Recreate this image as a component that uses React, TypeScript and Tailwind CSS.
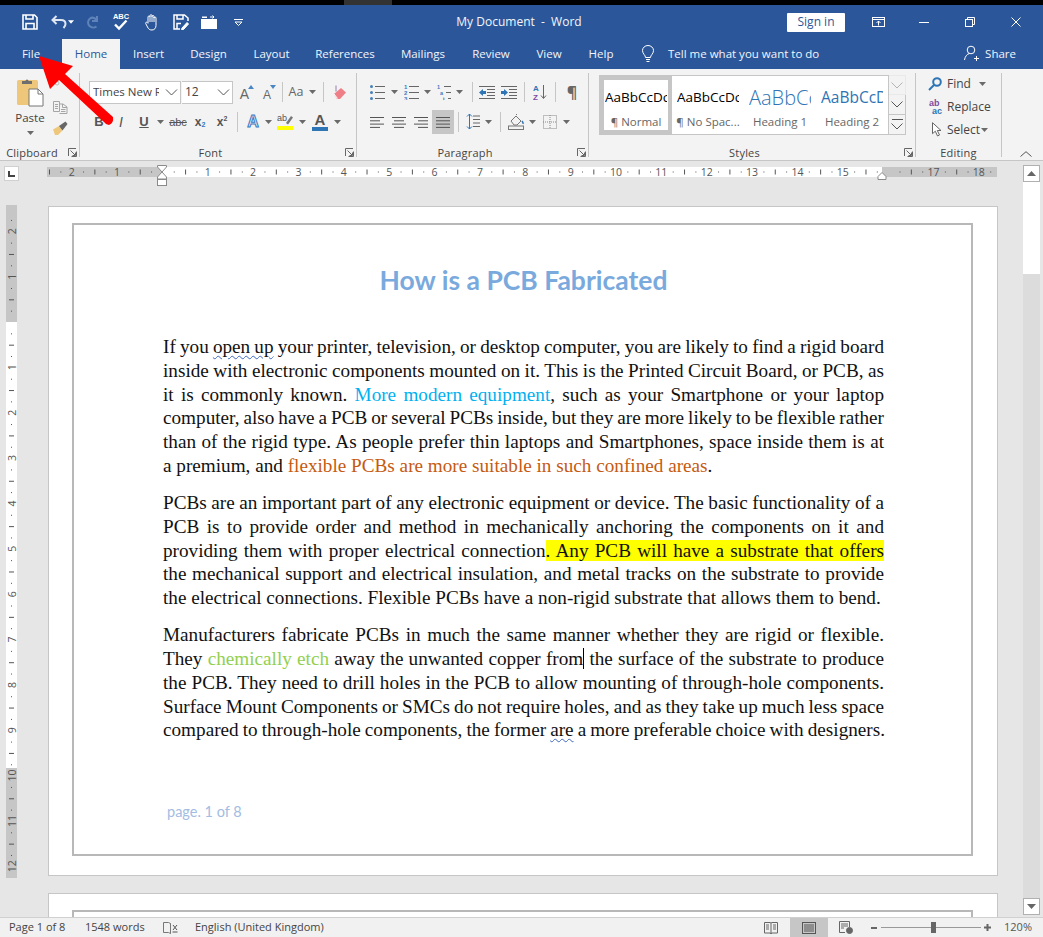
import React from "react";

const ui = { fontFamily: '"Open Sans", "Noto Sans", sans-serif' };

function Drop({ c = "#6a6a6a" }: { c?: string }) {
  return (
    <svg width="7" height="4" viewBox="0 0 7 4"><path d="M0 0h7L3.500 4z" fill={c} /></svg>
  );
}
function Chevron({ w = 12 }: { w?: number }) {
  return (
    <svg width={w} height="7" viewBox="0 0 12 7" fill="none" stroke="#555" strokeWidth="1"><path d="M0.500 0.500 6 6l5.500-5.500" /></svg>
  );
}
function Launcher() {
  return (
    <svg width="9" height="9" viewBox="0 0 9 9" fill="none" stroke="#666" strokeWidth="1"><path d="M0.500 8V0.500H8M8.500 3.500v5h-5M2.500 2.500 7 7M7.500 4.500v3h-3" /></svg>
  );
}
function Sep({ h = "h-[24px]" }: { h?: string }) {
  return <div className={`w-px bg-[#c6c6c6] ${h}`} />;
}
function Cell({ w, children, className = "" }: { w: string; children?: React.ReactNode; className?: string }) {
  return <div className={`flex items-center justify-center h-[24px] shrink-0 ${w} ${className}`}>{children}</div>;
}
function Lines({ kind }: { kind: "l" | "c" | "r" | "j" }) {
  const rows = { l: [[0, 14], [0, 10], [0, 14], [0, 10]], c: [[0, 14], [2, 12], [0, 14], [2, 12]], r: [[0, 14], [4, 14], [0, 14], [4, 14]], j: [[0, 14], [0, 14], [0, 14], [0, 14]] }[kind];
  return (
    <svg width="14" height="11" viewBox="0 0 14 11">
      {rows.map((r, i) => <rect key={i} x={r[0]} y={i * 3.300} width={r[1] - r[0]} height="1" fill="#555" />)}
    </svg>
  );
}

function QuickAccess() {
  return (
    <div className="flex items-center pl-[21px] h-full">
      <Cell w="w-[18px]">
        <svg width="16" height="16" viewBox="0 0 16 16" fill="none" stroke="#fff" strokeWidth="1.600"><path d="M1 1h11.500L15 3.500V15H1z" /><path d="M4 1v4h7V1M4 15v-5.500h8V15" /></svg>
      </Cell>
      <Cell w="w-[25px] ml-[7px]">
        <svg width="16" height="14" viewBox="0 0 16 14" fill="none" stroke="#dfe7f3" strokeWidth="2"><path d="M5.500 1 1.500 5l4 4M2 5h8c3 0 4.500 1.800 4.500 4 0 2-1 3-2 4" /></svg>
      </Cell>
      <Cell w="w-[6px] -ml-[3px]"><Drop c="#fff" /></Cell>
      <Cell w="w-[18px] ml-[10px]">
        <svg width="15" height="14" viewBox="0 0 15 14" fill="none" stroke="#5f82b8" strokeWidth="2"><path d="M11 1v5h-5M11 5.500C8.500 2.500 6 2 4 3.500 1.500 5.500 1.500 9 3.500 11c2 2 5 2 7 .5" /></svg>
      </Cell>
      <Cell w="w-[20px] ml-[9px]">
        <svg width="20" height="20" viewBox="0 0 20 20">
          <text x="10" y="7" textAnchor="middle" fontSize="7.500" fontWeight="700" fill="#fff" fontFamily="Liberation Sans">ABC</text>
          <path d="M4 12.500 8 16.500 15.500 8.500" fill="none" stroke="#fff" strokeWidth="2.400" />
        </svg>
      </Cell>
      <Cell w="w-[16px] ml-[12px]">
        <svg width="13" height="17" viewBox="0 0 13 17" fill="none" stroke="#fff"><path d="M3 9V3a1 1 0 0 1 2 0V1.700a1 1 0 0 1 2 0V2.500a1 1 0 0 1 2 0V4a1 1 0 0 1 2 0v7.500c0 2.500-1.500 4.500-4 4.500-2.500 0-3.500-1-4.500-3L.7 9.500c-.5-1 .8-1.800 1.500-1L3 9.500M5 3v5M7 2v6M9 3v5" /></svg>
      </Cell>
      <Cell w="w-[16px] ml-[14px]">
        <svg width="16" height="16" viewBox="0 0 16 16" fill="none" stroke="#fff" strokeWidth="1.500"><path d="M7 15H1V1h10.500L15 4v3M4 1v4h6V1M4 15V9.500h4" /><path d="M9 14l5-5.500 1.500 1.500-5 5.500H8.500z" fill="#fff" strokeWidth="1" /></svg>
      </Cell>
      <Cell w="w-[18px] ml-[11px]">
        <svg width="16" height="14" viewBox="0 0 16 14" fill="#fff"><path d="M0 4h16v10H0zM1 1.500h5V3H1z" /><path d="M9 2h4M11.500 .5 13 2l-1.500 1.500" stroke="#fff" fill="none" /></svg>
      </Cell>
      <Cell w="w-[12px] ml-[14px]">
        <svg width="9" height="7" viewBox="0 0 9 7" fill="#fff"><rect x="0" y="0" width="9" height="1" /><path d="M1 3h7L4.500 6.500z" fill="none" stroke="#fff" /></svg>
      </Cell>
    </div>
  );
}

function TitleBar() {
  return (
    <div className="h-[34px] bg-[#2b579a] flex items-center text-white shrink-0 relative">
      <div className="w-[430px] h-full shrink-0"><QuickAccess /></div>
      <div className="w-[178px] shrink-0 text-center text-[12px] text-[#f2f5fa] whitespace-pre">My Document  -  Word</div>
      <div className="w-[179px] shrink-0" />
      <div className="w-[58px] shrink-0 h-[19px] bg-white rounded-[1px] text-[#2b579a] text-[12px] flex items-center justify-center">Sign in</div>
      <Cell w="w-[66px]">
        <svg width="13" height="10" viewBox="0 0 13 10" fill="none" stroke="#fff"><rect x=".5" y=".5" width="12" height="9" /><path d="M0 2.500h13M6.500 8.500V4M4.500 6l2-2 2 2" /></svg>
      </Cell>
      <Cell w="w-[26px]"><div className="w-[10px] h-px bg-white" /></Cell>
      <Cell w="w-[66px]">
        <svg width="10" height="10" viewBox="0 0 10 10" fill="none" stroke="#fff"><rect x=".5" y="2.500" width="7" height="7" /><path d="M2.500 2.500v-2h7v7h-2" /></svg>
      </Cell>
      <Cell w="w-[26px]">
        <svg width="10" height="10" viewBox="0 0 10 10" fill="none" stroke="#fff"><path d="M.5.500l9 9M9.500.500l-9 9" /></svg>
      </Cell>
    </div>
  );
}

function Tab({ w, children }: { w: string; children: React.ReactNode }) {
  return <div className={`${w} text-center text-[#f2f5fa] pt-[6px]`}>{children}</div>;
}

function Tabs() {
  return (
    <div className="h-[30px] bg-[#2b579a] flex text-[11.5px] shrink-0">
      <Tab w="w-[62px]">File</Tab>
      <div className="w-[58px] bg-[#f3f3f3] text-[#2b579a] text-center pt-[6px]">Home</div>
      <Tab w="w-[57px]">Insert</Tab>
      <Tab w="w-[63px]">Design</Tab>
      <Tab w="w-[63px]">Layout</Tab>
      <Tab w="w-[84px]">References</Tab>
      <Tab w="w-[72px]">Mailings</Tab>
      <Tab w="w-[64px]">Review</Tab>
      <Tab w="w-[52px]">View</Tab>
      <Tab w="w-[52px]">Help</Tab>
      <div className="ml-[14px] flex items-start pt-[6px] text-[#f2f5fa]">
        <svg width="14" height="18" viewBox="0 0 14 18" fill="none" stroke="#fff"><path d="M4.500 12.500C4.500 10 1.500 9 1.500 5.500a5.500 5 0 0 1 11 0C12.500 9 9.500 10 9.500 12.500zM5 14.500h4M5.500 16.500h3" /></svg>
        <span className="ml-[13px] text-[11.5px]">Tell me what you want to do</span>
      </div>
      <div className="ml-auto mr-[27px] flex items-start pt-[6px] text-[#f2f5fa]">
        <svg width="15" height="16" viewBox="0 0 15 16" fill="none" stroke="#fff"><circle cx="7" cy="5" r="3.800" /><path d="M.5 15c.5-3.500 2.500-6 5-6.500M10 13.500h5M12.500 11v5" /></svg>
        <span className="ml-[6px]">Share</span>
      </div>
    </div>
  );
}

function Group({ w, label, children, launcher = true }: { w: string; label: string; children: React.ReactNode; launcher?: boolean }) {
  return (
    <div className={`${w} flex flex-col shrink-0 relative border-r border-[#c6c6c6] mt-[4px] h-[84px]`}>
      <div className="flex-1 min-h-0">{children}</div>
      <div className={`h-[17px] -mb-[4px] text-[11px] text-[#444] text-center leading-[17px] tracking-[0.2px] ${launcher ? "pr-[15px]" : ""}`}>{label}</div>
      {launcher && <div className="absolute right-[2px] bottom-0 leading-none"><Launcher /></div>}
    </div>
  );
}

function Clipboard() {
  return (
    <Group w="w-[80px]" label="Clipboard">
      <div className="flex">
        <div className="w-[47px] flex flex-col items-center pl-[13px] pt-[4px]">
          <svg width="30" height="30" viewBox="0 0 30 30">
            <rect x="2" y="3" width="21" height="25" rx="1.500" fill="#eec77b" />
            <path d="M7 4h3.500a1.500 1.500 0 0 1 3 0H17v3H7z" fill="#6e6e6e" />
            <path d="M14 12h9l5 5v12H14z" fill="#fff" stroke="#777" />
            <path d="M23 12v5h5" fill="none" stroke="#777" />
          </svg>
          <div className="text-[11.5px] text-[#444] mt-[3px] leading-[16px]">Paste</div>
          <div className="mt-[5px] leading-none flex"><Drop /></div>
        </div>
        <div className="flex flex-col items-center pl-[5px] pt-[7px] gap-[7px]">
          <svg width="12" height="14" viewBox="0 0 12 14" fill="none" stroke="#bbb"><circle cx="3" cy="3" r="2" /></svg>
          <svg width="15" height="13" viewBox="0 0 15 13" fill="none" stroke="#a5a5a5"><path d="M.5.500h6v10h-6zM7 3h3l4 3v6.500H6.500M9.500 3v3.500H14M2 3.500h3M2 5.500h3M2 7.500h3M8 8.500h4.500M8 10.500h4.500" /></svg>
          <svg width="16" height="15" viewBox="0 0 16 15"><path d="M1 8.500 7 5l3.500 4.500L6 14H3z" fill="#eec77b" /><path d="M7 5l6.500-4.500 2 2.500L10.500 9.500z" fill="#666" /></svg>
        </div>
      </div>
    </Group>
  );
}

function Grow({ up }: { up: boolean }) {
  return (
    <div className="relative flex items-end justify-center w-full h-[18px]">
      <span className={`${up ? "text-[14px]" : "text-[12px]"} leading-none text-[#666]`} style={{ fontFamily: "Liberation Sans" }}>A</span>
      <svg className="absolute right-[2px] top-[2px]" width="6" height="4" viewBox="0 0 6 4"><path d={up ? "M0 4h6L3 0z" : "M0 0h6L3 4z"} fill="#4a86c5" /></svg>
    </div>
  );
}

function FontGroup() {
  return (
    <Group w="w-[277px]" label="Font">
      <div className="flex items-center pl-[9px] pt-[7px] h-[31px]">
        <div className="w-[92px] h-[23px] shrink-0 bg-white border border-[#c6c6c6] flex items-center text-[11.5px] text-[#444] pl-[3px]">
          <span className="w-[66px] overflow-hidden whitespace-nowrap">Times New Roman</span>
          <span className="ml-[6px] flex"><Chevron w={13} /></span>
        </div>
        <div className="w-[51px] h-[23px] shrink-0 bg-white border border-[#c6c6c6] border-l-0 flex items-center text-[12px] text-[#444] pl-[3px] ml-px">
          <span className="w-[29px]">12</span>
          <span className="ml-[3px] flex"><Chevron w={13} /></span>
        </div>
        <Cell w="w-[23px]"><Grow up /></Cell>
        <Cell w="w-[22px]"><Grow up={false} /></Cell>
        <Cell w="w-[8px]"><Sep h="h-[20px]" /></Cell>
        <Cell w="w-[20px] text-[12.500px] text-[#666]">Aa</Cell>
        <Cell w="w-[10px] ml-[1px]"><Drop /></Cell>
        <Cell w="w-[8px] ml-[2px]"><Sep h="h-[20px]" /></Cell>
        <Cell w="w-[26px]">
          <svg width="15" height="15" viewBox="0 0 15 15"><path d="M1 9 8 3l5 4.500L7 14H4z" fill="#ef7f86" /><path d="M1 9l3.500 4.500" stroke="#fff" /><path d="M3 0.500v6" stroke="#b7a3c9" strokeWidth="1.500" /></svg>
        </Cell>
      </div>
      <div className="flex items-center pl-[9px] pt-[6px] text-[#555]" style={{ fontFamily: "Liberation Sans" }}>
        <Cell w="w-[20px] text-[13px] font-bold">B</Cell>
        <Cell w="w-[24px] text-[14px] italic">I</Cell>
        <Cell w="w-[22px] text-[13px] font-bold underline">U</Cell>
        <Cell w="w-[10px]"><Drop /></Cell>
        <Cell w="w-[26px] text-[11px] line-through">abc</Cell>
        <Cell w="w-[18px] text-[12px] font-bold">x<span className="text-[7px] text-[#2b79c2] mt-[6px]">2</span></Cell>
        <Cell w="w-[26px] text-[12px] font-bold">x<span className="text-[7px] -mt-[6px]">2</span></Cell>
        <Cell w="w-[4px]"><Sep h="h-[20px]" /></Cell>
        <Cell w="w-[24px] ml-[2px]"><span className="text-[16px] font-bold text-[#dce8f6] leading-none [-webkit-text-stroke:1px_#3b79c2]">A</span></Cell>
        <Cell w="w-[7px]"><Drop /></Cell>
        <Cell w="w-[27px]">
          <svg width="17" height="16" viewBox="0 0 17 16"><text x="0" y="7" fontSize="9" fill="#555" fontFamily="Liberation Sans">ab</text><path d="M9 9l5-7 2 1.500L11 10.500z" fill="#777" /><rect x="0" y="12" width="16" height="4" fill="#ffff00" /></svg>
        </Cell>
        <Cell w="w-[7px]"><Drop /></Cell>
        <Cell w="w-[28px]">
          <div className="flex flex-col items-center leading-none"><span className="text-[15px] font-bold leading-[12px]">A</span><div className="w-[16px] h-[4px] bg-[#2e75b6] mt-[1px]" /></div>
        </Cell>
        <Cell w="w-[7px]"><Drop /></Cell>
      </div>
    </Group>
  );
}

function ListIcon({ kind }: { kind: "b" | "n" | "m" }) {
  return (
    <svg width="15" height="15" viewBox="0 0 15 15">
      {[1.500, 7.500, 13.500].map((y, i) => (
        <g key={y}>
          {kind === "b" && <circle cx="1.500" cy={y} r="1.500" fill="#4a7fb8" />}
          {kind === "n" && <text x="0" y={y + 2} fontSize="6" fontWeight="700" fill="#3b79c2" fontFamily="Liberation Sans">{i + 1}</text>}
          {kind === "m" && <text x={i * 3} y={y + 2} fontSize="5.500" fontWeight="700" fill={i === 2 ? "#555" : "#3b79c2"} fontFamily="Liberation Sans">{["1", "a", "i"][i]}</text>}
          <rect x={5 + (kind === "m" ? (i + 1) * 2 : 0)} y={y - .5} width={kind === "m" ? 7 - i * 2 : 10} height="1" fill="#666" />
        </g>
      ))}
    </svg>
  );
}

function Indent({ dir }: { dir: "l" | "r" }) {
  return (
    <svg width="16" height="13" viewBox="0 0 16 13">
      <rect x="0" y="0" width="16" height="1" fill="#666" />
      <rect x="8" y="3" width="8" height="1" fill="#666" />
      <rect x="8" y="6" width="8" height="1" fill="#666" />
      <rect x="8" y="9" width="8" height="1" fill="#666" />
      <rect x="0" y="12" width="16" height="1" fill="#666" />
      <path d={dir === "l" ? "M0 6.500 4 3v2h3v3H4v2z" : "M7 6.500 3 3v2H0v3h3v2z"} fill="#2e75b6" />
    </svg>
  );
}

function Paragraph() {
  return (
    <Group w="w-[232px]" label="Paragraph">
      <div className="flex items-center pl-[13px] pt-[7px] h-[31px]">
        <Cell w="w-[15px]"><ListIcon kind="b" /></Cell>
        <Cell w="w-[18px]"><Drop /></Cell>
        <Cell w="w-[16px]"><ListIcon kind="n" /></Cell>
        <Cell w="w-[17px]"><Drop /></Cell>
        <Cell w="w-[16px]"><ListIcon kind="m" /></Cell>
        <Cell w="w-[14px]"><Drop /></Cell>
        <Cell w="w-[12px]"><Sep h="h-[20px]" /></Cell>
        <Cell w="w-[16px] ml-[1px]"><Indent dir="l" /></Cell>
        <Cell w="w-[16px] ml-[6px]"><Indent dir="r" /></Cell>
        <Cell w="w-[14px]"><Sep h="h-[20px]" /></Cell>
        <Cell w="w-[18px]">
          <svg width="14" height="16" viewBox="0 0 14 16"><text x="0" y="7" fontSize="8" fontWeight="700" fill="#2e75b6" fontFamily="Liberation Sans">A</text><text x="0" y="15.500" fontSize="8" fontWeight="700" fill="#7d4aa0" fontFamily="Liberation Sans">Z</text><path d="M10.500 1v13M8 11.500l2.500 3 2.500-3" fill="none" stroke="#666" /></svg>
        </Cell>
        <Cell w="w-[13px]"><Sep h="h-[20px]" /></Cell>
        <Cell w="w-[20px] text-[16px] font-bold text-[#666]">¶</Cell>
      </div>
      <div className="flex items-center pl-[9px] pt-[6px]">
        <Cell w="w-[22px]"><Lines kind="l" /></Cell>
        <Cell w="w-[22px]"><Lines kind="c" /></Cell>
        <Cell w="w-[22px]"><Lines kind="r" /></Cell>
        <Cell w="w-[22px] bg-[#c6c6c6]"><Lines kind="j" /></Cell>
        <Cell w="w-[8px]"><Sep h="h-[20px]" /></Cell>
        <Cell w="w-[22px]">
          <svg width="14" height="16" viewBox="0 0 14 16" fill="none"><path d="M3.500 0v15M1 2.500 3.500 0 6 2.500M1 12.500 3.500 15 6 12.500" stroke="#2e75b6" /><path d="M7 2h7M7 5.500h7M7 9h7M7 12.500h7" stroke="#666" /></svg>
        </Cell>
        <Cell w="w-[8px]"><Drop /></Cell>
        <Cell w="w-[16px]"><Sep h="h-[20px]" /></Cell>
        <Cell w="w-[17px]">
          <svg width="17" height="16" viewBox="0 0 17 16" fill="none" stroke="#777"><path d="M3 7l5-5 5 5-4 4H6z" /><path d="M8 1l1-1" /><path d="M14 7c1 1.500 1.500 2 1 3" stroke="#2e75b6" strokeWidth="1.500" /><rect x=".5" y="12" width="15" height="3.500" /></svg>
        </Cell>
        <Cell w="w-[14px]"><Drop /></Cell>
        <Cell w="w-[22px]">
          <svg width="14" height="14" viewBox="0 0 14 14" fill="none" stroke="#888" strokeDasharray="1 1"><rect x=".5" y=".5" width="13" height="13" /><path d="M7 0v14M0 7h14" /></svg>
        </Cell>
        <Cell w="w-[10px]"><Drop /></Cell>
      </div>
    </Group>
  );
}

function StyleCard({ sample, label, sampleClass, active }: { sample: string; label: string; sampleClass: string; active?: boolean }) {
  return (
    <div className={`w-[72px] h-[58px] shrink-0 flex flex-col items-center bg-white ${active ? "border-[4px] border-[#c6c6c6]" : "pt-[4px]"}`}>
      <div className={`w-[62px] overflow-hidden whitespace-nowrap h-[33px] pt-[2px] flex items-center ${sampleClass}`}>{sample}</div>
      <div className="text-[11.5px] text-[#666] whitespace-nowrap">{label}</div>
    </div>
  );
}

function Styles() {
  return (
    <Group w="w-[327px]" label="Styles">
      <div className="flex pl-[10px] pt-[2px]">
        <div className="flex border border-[#c6c6c6] bg-white">
          <StyleCard sample="AaBbCcDc" label="¶ Normal" sampleClass="text-[13.500px] text-black" active />
          <StyleCard sample="AaBbCcDc" label="¶ No Spac..." sampleClass="text-[13.500px] text-black" />
          <StyleCard sample="AaBbCc" label="Heading 1" sampleClass="text-[20px] font-light text-[#2e74b5]" />
          <StyleCard sample="AaBbCcD" label="Heading 2" sampleClass="text-[15.500px] text-[#2e74b5]" />
        </div>
        <div className="w-[17px] h-[60px] flex flex-col bg-[#f3f3f3]">
          <div className="h-[20px] border border-l-0 border-[#dcdcdc] flex items-center justify-center opacity-40"><Chevron /></div>
          <div className="h-[20px] border border-l-0 border-t-0 border-[#c6c6c6] flex items-center justify-center bg-[#f3f3f3]"><Chevron /></div>
          <div className="h-[20px] border border-l-0 border-t-0 border-[#c6c6c6] flex flex-col items-center justify-center gap-[3px]"><div className="w-[11px] h-px bg-[#555]" /><Chevron /></div>
        </div>
      </div>
    </Group>
  );
}

function Editing() {
  return (
    <Group w="w-[86px]" label="Editing" launcher={false}>
      <div className="flex flex-col pl-[12px] -mt-[1px] text-[12px] text-[#444]">
        <div className="flex items-center h-[23px]">
          <svg width="14" height="14" viewBox="0 0 14 14" fill="none" stroke="#2e75b6" strokeWidth="2"><circle cx="9" cy="5" r="3.800" /><path d="M6 8 1 13" /></svg>
          <span className="ml-[5px]">Find</span>
          <span className="ml-[8px] flex"><Drop /></span>
        </div>
        <div className="flex items-center h-[23px]">
          <svg width="16" height="16" viewBox="0 0 16 16"><text x="1" y="7" fontSize="9" fontWeight="700" fill="#7d4aa0" fontFamily="Liberation Sans">ab</text><text x="4" y="15" fontSize="9" fontWeight="700" fill="#2e75b6" fontFamily="Liberation Sans">ac</text></svg>
          <span className="ml-[3px]">Replace</span>
        </div>
        <div className="flex items-center h-[23px] pl-[4px]">
          <svg width="10" height="15" viewBox="0 0 10 15" fill="#fff" stroke="#666"><path d="M.5.700v11l2.800-2.500L5.500 14l2-1-2.200-4.500H9z" /></svg>
          <span className="ml-[5px]">Select</span>
          <span className="ml-[1px] flex"><Drop /></span>
        </div>
      </div>
    </Group>
  );
}

function Ribbon() {
  return (
    <div className="h-[92px] bg-[#f3f3f3] flex shrink-0 relative border-b border-[#c6c6c6]">
      <Clipboard />
      <FontGroup />
      <Paragraph />
      <Styles />
      <Editing />
      <div className="absolute right-[11px] bottom-[3px]">
        <svg width="12" height="6" viewBox="0 0 12 6" fill="none" stroke="#555"><path d="M.5 5.500 6 .7l5.500 4.800" /></svg>
      </div>
    </div>
  );
}

function rulerMarks(from: number, to: number) {
  const out: { pos: number; type: "dot" | "tick" | "num"; n: number }[] = [];
  for (let q = from; q <= to; q++) {
    const pos = q * 45.36 / 4;
    if (q === 0) continue;
    if (q % 4 === 0) out.push({ pos, type: "num", n: Math.abs(q / 4) });
    else if (q % 2 === 0) out.push({ pos, type: "tick", n: 0 });
    else out.push({ pos, type: "dot", n: 0 });
  }
  return out;
}

function HRuler() {
  return (
    <svg width="960" height="26" viewBox="0 0 960 26" className="block">
      <rect x="0" y="6" width="115" height="10" fill="#c6c6c6" />
      <rect x="115" y="6" width="720" height="10" fill="#fff" />
      <rect x="835" y="6" width="115" height="10" fill="#c6c6c6" />
      {rulerMarks(-10, 74).filter((m) => m.pos + 115 < 945 && m.n !== 16).map((m, i) => {
        const x = m.pos + 115.400;
        if (m.type === "num") return <text key={i} x={x} y="15" fontSize="10.500" textAnchor="middle" fill="#555" fontFamily="Open Sans">{m.n}</text>;
        if (m.type === "tick") return <rect key={i} x={x} y="8.500" width="1" height="5" fill="#555" />;
        return <rect key={i} x={x} y="10.500" width="1" height="1" fill="#555" />;
      })}
      <g fill="#fff" stroke="#8a8a8a">
        <path d="M110.500 4.500h9v1.500l-4.500 5-4.500-5z" />
        <path d="M115 11l4.500 5v2h-9v-2z" />
        <rect x="110.500" y="18.500" width="9" height="6" />
        <path d="M835 11.500l4 4v3h-8v-3z" />
      </g>
    </svg>
  );
}

function VRuler() {
  const h = 680;
  const zero = 117;
  return (
    <svg width="11" height={h} viewBox={`0 0 11 ${h}`} className="block">
      <rect x="0" y="0" width="11" height={zero} fill="#c6c6c6" />
      <rect x="0" y={zero} width="11" height="446" fill="#fff" />
      <rect x="0" y={zero + 446} width="11" height="110" fill="#c6c6c6" />
      {rulerMarks(-9, 48).map((m, i) => {
        const y = m.pos + zero;
        if (m.type === "num") return <text key={i} transform={`translate(9.500 ${y}) rotate(-90)`} fontSize="10.500" textAnchor="middle" fill="#555" fontFamily="Open Sans">{m.n}</text>;
        if (m.type === "tick") return <rect key={i} x="3" y={y} width="5" height="1" fill="#555" />;
        return <rect key={i} x="5" y={y} width="1" height="1" fill="#555" />;
      })}
    </svg>
  );
}

function Line({ children, last, ws = "" }: { children: React.ReactNode; last?: boolean; ws?: string }) {
  return <div className={`${last ? "whitespace-nowrap" : "[text-align:justify] [text-align-last:justify] whitespace-nowrap"} ${ws}`}>{children}</div>;
}

const squiggle = "underline decoration-wavy decoration-[#3f67c4] decoration-[1px] underline-offset-[2px]";

function Page() {
  return (
    <div className="h-[670px] w-[950px] bg-white border border-[#c6c6c6] pt-[16px] pl-[23px] pr-[24px] shrink-0">
      <div className="h-[633px] border-2 border-[#b8b8b8] flex flex-col pl-[89px] pr-[86px] overflow-hidden">
        <div className="text-[26.500px] leading-[32px] font-bold text-[#7aaadd] text-center pt-[39px] h-[110px] shrink-0 ml-[-89px] mr-[-86px] pl-[2px] box-border" style={{ fontFamily: '"Lato", sans-serif' }}>How is a PCB Fabricated</div>
        <div className="text-[19.200px] leading-[23.800px] text-[#111] flex flex-col gap-[13.200px] w-[721px] shrink-0" style={{ fontFamily: '"Liberation Serif", serif' }}>
          <div>
            <Line ws="[word-spacing:-0.7px]">If you <span className={squiggle}>open up</span> your printer, television, or desktop computer, you are likely to find a rigid board</Line>
            <Line ws="[word-spacing:-0.4px]">inside with electronic components mounted on it. This is the Printed Circuit Board, or PCB, as</Line>
            <Line>it is commonly known. <span className="text-[#00b0f0]">More modern equipment</span>, such as your Smartphone or your laptop</Line>
            <Line ws="[word-spacing:-0.9px]">computer, also have a PCB or several PCBs inside, but they are more likely to be flexible rather</Line>
            <Line>than of the rigid type. As people prefer thin laptops and Smartphones, space inside them is at</Line>
            <Line last>a premium, and <span className="text-[#c55a11]">flexible PCBs are more suitable in such confined areas</span>.</Line>
          </div>
          <div>
            <Line ws="[word-spacing:-0.3px]">PCBs are an important part of any electronic equipment or device. The basic functionality of a</Line>
            <Line>PCB is to provide order and method in mechanically anchoring the components on it and</Line>
            <Line>providing them with proper electrical connection<span className="bg-[#ffff00]">. Any PCB will have a substrate that offers</span></Line>
            <Line>the mechanical support and electrical insulation, and metal tracks on the substrate to provide</Line>
            <Line last>the electrical connections. Flexible PCBs have a non-rigid substrate that allows them to bend.</Line>
          </div>
          <div>
            <Line>Manufacturers fabricate PCBs in much the same manner whether they are rigid or flexible.</Line>
            <Line>They <span className="text-[#92d050]">chemically etch</span> away the unwanted copper <span className="border-r border-black">from</span> the surface of the substrate to produce</Line>
            <Line>the PCB. They need to drill holes in the PCB to allow mounting of through-hole components.</Line>
            <Line ws="[word-spacing:-0.85px]">Surface Mount Components or SMCs do not require holes, and as they take up much less space</Line>
            <Line ws="[word-spacing:-0.75px]">compared to through-hole components, the former <span className={squiggle}>are</span> a more preferable choice with designers.</Line>
          </div>
        </div>
        <div className="mt-[59px] ml-[4px] text-[14.500px] text-[#a3bce2] shrink-0" style={{ fontFamily: '"Lato", sans-serif' }}>page. 1 of 8</div>
      </div>
    </div>
  );
}

function Scrollbar() {
  return (
    <div className="w-[17px] h-[750px] mt-[4px] bg-[#dcdcdc] flex flex-col shrink-0 ml-[25px]">
      <div className="h-[17px] bg-white border border-[#b0b0b0] flex items-center justify-center">
        <svg width="9" height="5" viewBox="0 0 9 5"><path d="M0 5h9L4.500 0z" fill="#666" /></svg>
      </div>
      <div className="h-[92px] bg-white" />
      <div className="flex-1" />
      <div className="h-[17px] bg-white border border-[#b0b0b0] flex items-center justify-center">
        <svg width="9" height="5" viewBox="0 0 9 5"><path d="M0 0h9L4.500 5z" fill="#666" /></svg>
      </div>
    </div>
  );
}

function DocArea() {
  return (
    <div className="h-[756px] bg-[#e6e6e6] flex overflow-hidden shrink-0 relative">
      <div className="w-[47px] shrink-0 flex flex-col">
        <div className="h-[44px] shrink-0 pl-[4px] pt-[5px]">
          <div className="w-[15px] h-[15px] bg-white border border-[#d0d0d0] flex items-center justify-center">
            <svg width="7" height="6" viewBox="0 0 7 6"><path d="M1 0v5h6" fill="none" stroke="#444" strokeWidth="2" /></svg>
          </div>
        </div>
        <div className="pl-[6px]"><VRuler /></div>
      </div>
      <div className="w-[951px] shrink-0 flex flex-col">
        <div className="h-[45px] shrink-0"><HRuler /></div>
        <div className="pl-px flex flex-col gap-[17px]">
          <Page />
          <Page />
        </div>
      </div>
      <Scrollbar />
    </div>
  );
}

function StatusBar() {
  return (
    <div className="h-[20px] bg-[#f1f1f1] flex items-center text-[11px] text-[#444] shrink-0 border-t border-[#d0d0d0]">
      <span className="ml-[9px] w-[76px]">Page 1 of 8</span>
      <span className="w-[78px]">1548 words</span>
      <svg width="15" height="14" viewBox="0 0 15 14" fill="none" stroke="#777"><path d="M.5 1.500h5l2 1v10l-2-1h-5zM7.500 2.500v10" /><path d="M10 4l4 5M14 4l-4 5M9.500 11h5" stroke="#555" /></svg>
      <span className="ml-[17px]">English (United Kingdom)</span>
      <div className="ml-auto flex items-center h-full">
        <Cell w="w-[20px]">
          <svg width="14" height="14" viewBox="0 0 14 14" fill="none" stroke="#666"><path d="M.5 1.500h6l.5 1 .5-1h6V12h-6l-.5 1-.5-1h-6zM7 2.500V13M2 4h3M2 6h3M2 8h3M9 4h3M9 6h3M9 8h3" /></svg>
        </Cell>
        <Cell w="w-[38px] !h-[20px] ml-[9px] bg-[#c6c6c6]">
          <svg width="14" height="12" viewBox="0 0 14 12" fill="none" stroke="#555"><rect x=".5" y=".5" width="13" height="11" /><path d="M2 3h10M2 5h10M2 7h10M2 9h10" /></svg>
        </Cell>
        <Cell w="w-[36px]">
          <svg width="14" height="13" viewBox="0 0 14 13" fill="none" stroke="#666"><path d="M6 11.500H.5V.500h10V6M2 3h7M2 5h7M2 7h3" /><circle cx="10.500" cy="9.500" r="3" fill="#666" /></svg>
        </Cell>
        <div className="ml-[7px] w-[6px] h-[2px] bg-[#666]" />
        <div className="relative w-[100px] h-px bg-[#999] ml-[4px] mr-[3px]">
          <div className="absolute left-[50px] -top-[5px] w-[5px] h-[11px] bg-[#666]" />
        </div>
        <svg width="7" height="7" viewBox="0 0 7 7"><path d="M3.500 0v7M0 3.500h7" stroke="#666" strokeWidth="2" /></svg>
        <span className="ml-[13px] mr-[11px] text-[#555]">120%</span>
      </div>
    </div>
  );
}

export default function App() {
  return (
    <div className="w-[1043px] h-[937px] overflow-hidden relative flex flex-col bg-[#e6e6e6]" style={ui}>
      <div className="h-[5px] bg-black shrink-0 flex"><div className="ml-[344px] w-[48px] bg-[#333]" /></div>
      <TitleBar />
      <Tabs />
      <Ribbon />
      <DocArea />
      <StatusBar />
      <svg className="absolute left-0 top-0 pointer-events-none" width="130" height="140" viewBox="0 0 130 140">
        <path d="M39 56 73 66 65 74 113 117 Q114 123 109 125 Q106 125 104 122 L59 80 50 89z" fill="#ff0000" />
      </svg>
    </div>
  );
}
